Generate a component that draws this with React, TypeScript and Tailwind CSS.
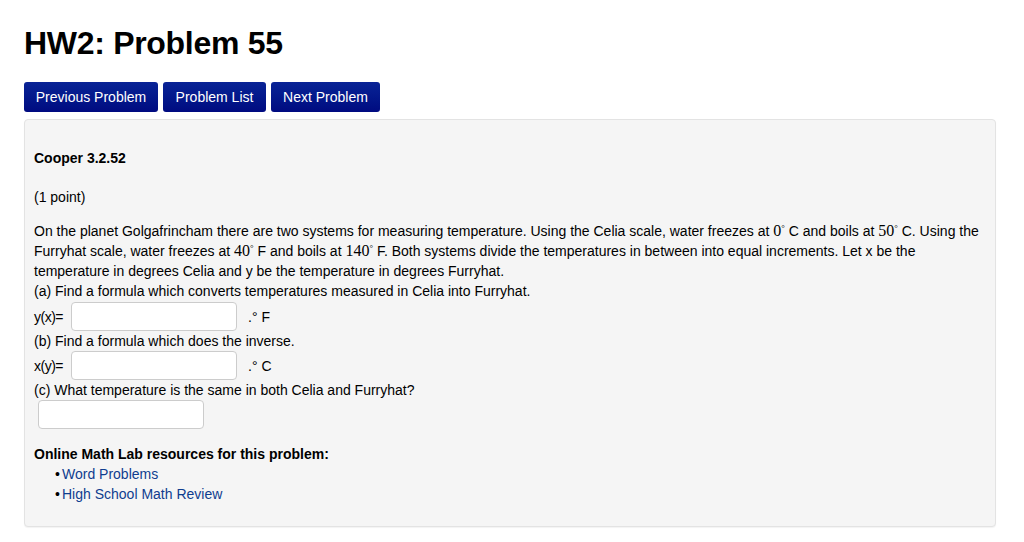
export default function App() {
  const deg = (v: string) => (
    <span className="font-['Liberation_Serif',serif] text-[16px] leading-[0]">
      {v}
      <span className="relative -top-[5px] text-[9px] leading-[0]">°</span>
    </span>
  );
  return (
    <div className="min-h-screen bg-white font-['Liberation_Sans',Arial,sans-serif] text-[14px] text-black">
      <div className="px-6 pt-[25px]">
        <h1 className="text-[32px] font-bold leading-[36px] tracking-[-0.3px]">HW2: Problem 55</h1>
        <div className="mt-[21px] flex gap-[5px]">
          <button className="h-[30px] w-[134px] rounded-[3px] bg-gradient-to-b from-[#0a2396] to-[#000a80] text-[14px] text-white">
            Previous Problem
          </button>
          <button className="h-[30px] w-[103px] rounded-[3px] bg-gradient-to-b from-[#0a2396] to-[#000a80] text-[14px] text-white">
            Problem List
          </button>
          <button className="h-[30px] w-[109px] rounded-[3px] bg-gradient-to-b from-[#0a2396] to-[#000a80] text-[14px] text-white">
            Next Problem
          </button>
        </div>
        <div className="mt-[7px] w-[972px] rounded-[4px] border border-[#e3e3e3] bg-[#f5f5f5] px-[9px] pt-[28px] pb-[22px] shadow-[0_1px_1px_rgba(0,0,0,0.05)] leading-[20px]">
          <div className="font-bold">Cooper 3.2.52</div>
          <div className="mt-[19px]">(1 point)</div>
          <div className="mt-[14px] whitespace-nowrap">
            On the planet Golgafrincham there are two systems for measuring temperature. Using the Celia scale, water freezes at {deg("0")} C and boils at {deg("50")} C. Using the
            <br />
            Furryhat scale, water freezes at {deg("40")} F and boils at {deg("140")} F. Both systems divide the temperatures in between into equal increments. Let x be the
            <br />
            temperature in degrees Celia and y be the temperature in degrees Furryhat.
            <br />
            (a) Find a formula which converts temperatures measured in Celia into Furryhat.
          </div>
          <div className="mt-px flex items-center h-[29px]">
            <span className="w-[37px] tracking-[-0.5px]">y(x)=</span>
            <input className="h-[29px] w-[166px] rounded-[4px] border border-[#cccccc] bg-white" />
            <span className="ml-[11px]">.° F</span>
          </div>
          <div>(b) Find a formula which does the inverse.</div>
          <div className="flex items-center h-[29px]">
            <span className="w-[37px] tracking-[-0.5px]">x(y)=</span>
            <input className="h-[29px] w-[166px] rounded-[4px] border border-[#cccccc] bg-white" />
            <span className="ml-[11px]">.° C</span>
          </div>
          <div>(c) What temperature is the same in both Celia and Furryhat?</div>
          <div className="pl-[4px]">
            <input className="block h-[29px] w-[166px] rounded-[4px] border border-[#cccccc] bg-white" />
          </div>
          <div className="mt-[15px] font-bold">Online Math Lab resources for this problem:</div>
          <ul className="pl-[21px]">
            <li className="flex">
              <span className="w-[7px]">•</span>
              <a className="text-[#0f3d8f]">Word Problems</a>
            </li>
            <li className="flex">
              <span className="w-[7px]">•</span>
              <a className="text-[#0f3d8f]">High School Math Review</a>
            </li>
          </ul>
        </div>
      </div>
    </div>
  );
}
